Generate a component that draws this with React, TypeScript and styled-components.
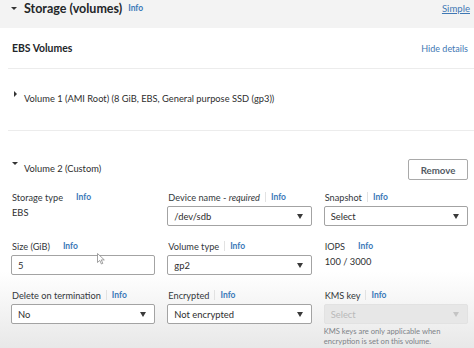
import styled, { createGlobalStyle } from 'styled-components'

const GlobalStyle = createGlobalStyle`
    html, body {
        margin: 0;
        padding: 0;
        background: #ffffff;
    }
    * {
        box-sizing: border-box;
    }
`

const Page = styled.div`
    position: relative;
    width: 474px;
    height: 348px;
    overflow: hidden;
    font-family: Lato, "Open Sans", sans-serif;
    color: #2e2e2e;
    background: linear-gradient(180deg, #ffffff 0%, #ffffff 78%, #e8e8e8 100%);
`

const Header = styled.div`
    height: 28px;
    background: #f3f3f3;
    display: flex;
    align-items: center;
    padding: 0 4px 12px 11px;
`

const HeaderTitle = styled.h2`
    margin: 0;
    font-size: 12.5px;
    font-weight: 700;
    color: #232629;
    display: flex;
    align-items: center;
`

const Caret = styled.span<{ $open?: boolean; $size?: number }>`
    display: inline-block;
    width: 0;
    height: 0;
    border-style: solid;
    ${p => p.$open
        ? `border-width: ${p.$size ?? 4}px ${p.$size ?? 4}px 0 ${p.$size ?? 4}px;
           border-color: #333 transparent transparent transparent;`
        : `border-width: ${p.$size ?? 4}px 0 ${p.$size ?? 4}px ${p.$size ?? 4}px;
           border-color: transparent transparent transparent #333;`}
`

const InfoLink = styled.a`
    font-size: 8.5px;
    font-weight: 700;
    color: #3a78b8;
    text-decoration: none;
`

const Spacer = styled.div`
    flex: 1;
`

const TextLink = styled.a<{ $underline?: boolean; $size?: number }>`
    font-size: ${p => p.$size ?? 9.6}px;
    color: #3f78b4;
    text-decoration: ${p => (p.$underline ? 'underline' : 'none')};
`

const Section = styled.div`
    padding-left: 8px;
`

const SubHeader = styled.div`
    height: 41px;
    display: flex;
    align-items: center;
    padding: 0 6px 0 4px;
    border-bottom: 1px solid #ececec;
`

const SubTitle = styled.h3`
    margin: 0;
    font-size: 10.4px;
    font-weight: 700;
    color: #232629;
`

const VolumeRow = styled.div<{ $divider?: boolean }>`
    display: flex;
    align-items: flex-start;
    gap: 5px;
    padding: 20px 6px 0 3px;
    height: ${p => (p.$divider ? '62px' : 'auto')};
    border-bottom: ${p => (p.$divider ? '1px solid #ececec' : 'none')};
`

const CaretBox = styled.div<{ $top?: number }>`
    padding-top: ${p => p.$top ?? 2}px;
    width: 8px;
    display: flex;
    justify-content: center;
`

const VolumeTitle = styled.span<{ $top?: number }>`
    font-size: 9.3px;
    line-height: 14px;
    margin-top: ${p => p.$top ?? 3}px;
`

const RemoveButton = styled.button`
    margin-left: auto;
    margin-top: 8px;
    width: 60px;
    height: 21px;
    background: #ffffff;
    border: 1px solid #a9a9a9;
    border-radius: 2px;
    font-family: inherit;
    font-size: 9.7px;
    font-weight: 700;
    color: #545b64;
    padding: 0;
`

const Grid = styled.div`
    display: grid;
    grid-template-columns: repeat(3, 1fr);
    column-gap: 12px;
    row-gap: 13px;
    padding: 10px 6px 0 3px;
`

const Field = styled.div`
    display: flex;
    flex-direction: column;
`

const LabelRow = styled.div`
    display: flex;
    align-items: center;
    height: 14px;
    margin-bottom: 2px;
    padding-left: 1px;
`

const Label = styled.span`
    font-size: 9.2px;
    color: #33373b;
`

const Required = styled.i`
    font-style: italic;
`

const Sep = styled.span<{ $hidden?: boolean }>`
    width: 1px;
    height: 10px;
    background: ${p => (p.$hidden ? 'transparent' : '#e2e2e2')};
    margin: 0 ${p => (p.$hidden ? 6 : 5)}px;
`

const Value = styled.div`
    font-size: 9.3px;
    line-height: 14px;
    padding-left: 1px;
`

const Control = styled.div<{ $disabled?: boolean }>`
    height: 20px;
    display: flex;
    align-items: center;
    padding: 0 8px 0 6px;
    border: 1px solid ${p => (p.$disabled ? '#e2e2e2' : '#a3a3a3')};
    background: ${p => (p.$disabled ? '#e7e7e7' : '#ffffff')};
    border-radius: 2px;
    font-size: 9.4px;
    color: ${p => (p.$disabled ? '#b9b9b9' : '#2e2e2e')};
`

const ControlText = styled.span`
    flex: 1;
`

const DropArrow = styled.span<{ $disabled?: boolean }>`
    width: 0;
    height: 0;
    border-style: solid;
    border-width: 5px 3.5px 0 3.5px;
    border-color: ${p => (p.$disabled ? '#c4c4c4' : '#3a3a3a')} transparent transparent transparent;
`

const Hint = styled.div`
    margin-top: 2px;
    font-size: 7.6px;
    line-height: 10px;
    color: #7d8288;
`

const Pointer = styled.svg`
    position: absolute;
    left: 97px;
    top: 253px;
`

type FieldProps = {
    label: React.ReactNode
    sep?: boolean
    children: React.ReactNode
}

const FormField = ({ label, sep = true, children }: FieldProps) => (
    <Field>
        <LabelRow>
            <Label>{label}</Label>
            <Sep $hidden={!sep} />
            <InfoLink>Info</InfoLink>
        </LabelRow>
        {children}
    </Field>
)

const Select = ({ value, disabled }: { value: string; disabled?: boolean }) => (
    <Control $disabled={disabled}>
        <ControlText>{value}</ControlText>
        <DropArrow $disabled={disabled} />
    </Control>
)

export default function App() {
    return (
        <Page>
            <GlobalStyle />
            <Header>
                <HeaderTitle>
                    <Caret $open $size={3.5} />
                    <span style={{ marginLeft: 7 }}>Storage (volumes)</span>
                    <InfoLink style={{ marginLeft: 6 }}>Info</InfoLink>
                </HeaderTitle>
                <Spacer />
                <TextLink $underline>Simple</TextLink>
            </Header>
            <Section>
                <SubHeader>
                    <SubTitle>EBS Volumes</SubTitle>
                    <Spacer />
                    <TextLink $size={9}>Hide details</TextLink>
                </SubHeader>
                <VolumeRow $divider>
                    <CaretBox><Caret $size={3} /></CaretBox>
                    <VolumeTitle>Volume 1 (AMI Root) (8 GiB, EBS, General purpose SSD (gp3))</VolumeTitle>
                </VolumeRow>
                <VolumeRow>
                    <CaretBox $top={11}><Caret $open $size={3} /></CaretBox>
                    <VolumeTitle $top={11}>Volume 2 (Custom)</VolumeTitle>
                    <RemoveButton>Remove</RemoveButton>
                </VolumeRow>
                <Grid>
                    <FormField label="Storage type" sep={false}>
                        <Value>EBS</Value>
                    </FormField>
                    <FormField label={<>Device name - <Required>required</Required></>}>
                        <Select value="/dev/sdb" />
                    </FormField>
                    <FormField label="Snapshot">
                        <Select value="Select" />
                    </FormField>

                    <FormField label="Size (GiB)" sep={false}>
                        <Control>5</Control>
                    </FormField>
                    <FormField label="Volume type">
                        <Select value="gp2" />
                    </FormField>
                    <FormField label="IOPS" sep={false}>
                        <Value>100 / 3000</Value>
                    </FormField>

                    <FormField label="Delete on termination">
                        <Select value="No" />
                    </FormField>
                    <FormField label="Encrypted">
                        <Select value="Not encrypted" />
                    </FormField>
                    <FormField label="KMS key">
                        <Select value="Select" disabled />
                        <Hint>
                            KMS keys are only applicable when
                            <br />
                            encryption is set on this volume.
                        </Hint>
                    </FormField>
                </Grid>
            </Section>
            <Pointer width="8" height="12" viewBox="0 0 8 12">
                <path d="M0.5 0.5 L0.5 9.5 L2.8 7.4 L4.4 11 L5.8 10.4 L4.3 6.9 L7.3 6.9 Z" fill="#ffffff" stroke="#8a8a8a" strokeWidth="0.8" />
            </Pointer>
        </Page>
    )
}
